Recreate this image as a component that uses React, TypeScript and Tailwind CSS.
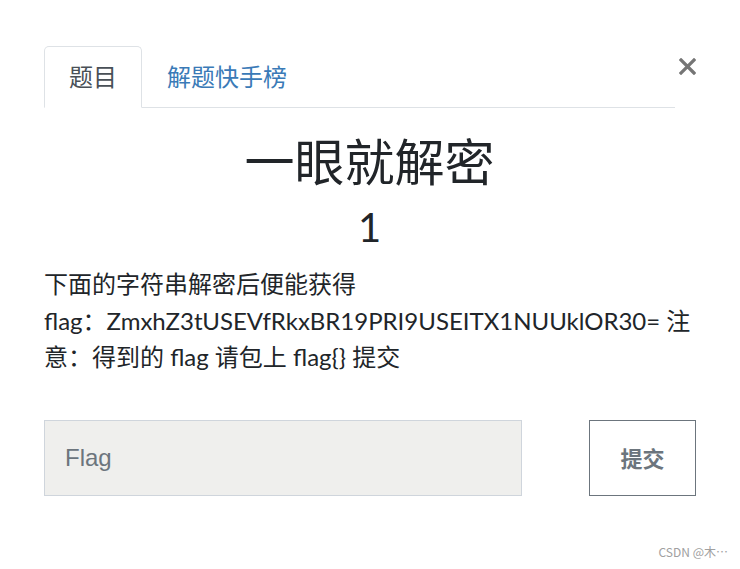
export default function App() {
  return (
    <div className="relative w-[740px] h-[569px] bg-white overflow-hidden font-['Lato','Noto_Sans_CJK_SC',sans-serif] text-[#212529]">
      <div className="pt-[46px] pl-[44px] w-[696px]">
        {/* Tabs + close */}
        <div className="flex items-start">
          <ul className="flex flex-1 border-b border-[#dee2e6]">
            <li className="-mb-px h-[62px] px-[24px] flex items-center border border-[#dee2e6] border-b-white rounded-t-[5px] bg-white text-[24px] text-[#495057]">
              题目
            </li>
            <li className="h-[61px] px-[25px] flex items-center text-[24px] text-[#3a7ab7]">
              解题快手榜
            </li>
          </ul>
          <button className="w-[21px] mt-[12px] flex justify-end text-[#757575]">
            <svg width="17" height="17" viewBox="0 0 17 17">
              <path d="M2 2 L15 15 M15 2 L2 15" stroke="currentColor" strokeWidth="3.2" strokeLinecap="square" />
            </svg>
          </button>
        </div>

        {/* Challenge */}
        <div className="pr-[1px]">
          <h2 className="mt-[24px] text-center text-[50px] leading-[60px] font-normal">一眼就解密</h2>
          <h3 className="mt-[11px] text-center text-[40px] leading-[48px] font-normal">1</h3>
          <p className="mt-[15px] text-[24px] leading-[36.5px]">
            下面的字符串解密后便能获得
            <br />
            flag：ZmxhZ3tUSEVfRkxBR19PRI9USEITX1NUUklOR30= 注意：得到的 flag 请包上 flag{'{}'} 提交
          </p>
        </div>

        {/* Submit row */}
        <div className="mt-[44px] flex items-stretch justify-between">
          <input
            placeholder="Flag"
            className="w-[478px] h-[76px] px-[20px] bg-[#efefed] border border-[#cfd5dc] text-[24px] font-['Liberation_Sans',sans-serif] placeholder:text-[#6c757d] outline-none"
          />
          <button className="w-[107px] h-[76px] border border-[#6c757d] bg-white text-[22px] font-bold text-[#6c757d] font-['Noto_Sans_CJK_SC',sans-serif]">
            提交
          </button>
        </div>
      </div>

      <div className="absolute right-[12px] bottom-[8px] text-[12px] text-[#a0a0a0] font-['Noto_Sans_CJK_SC',sans-serif]">
        CSDN @木⋯
      </div>
    </div>
  )
}
